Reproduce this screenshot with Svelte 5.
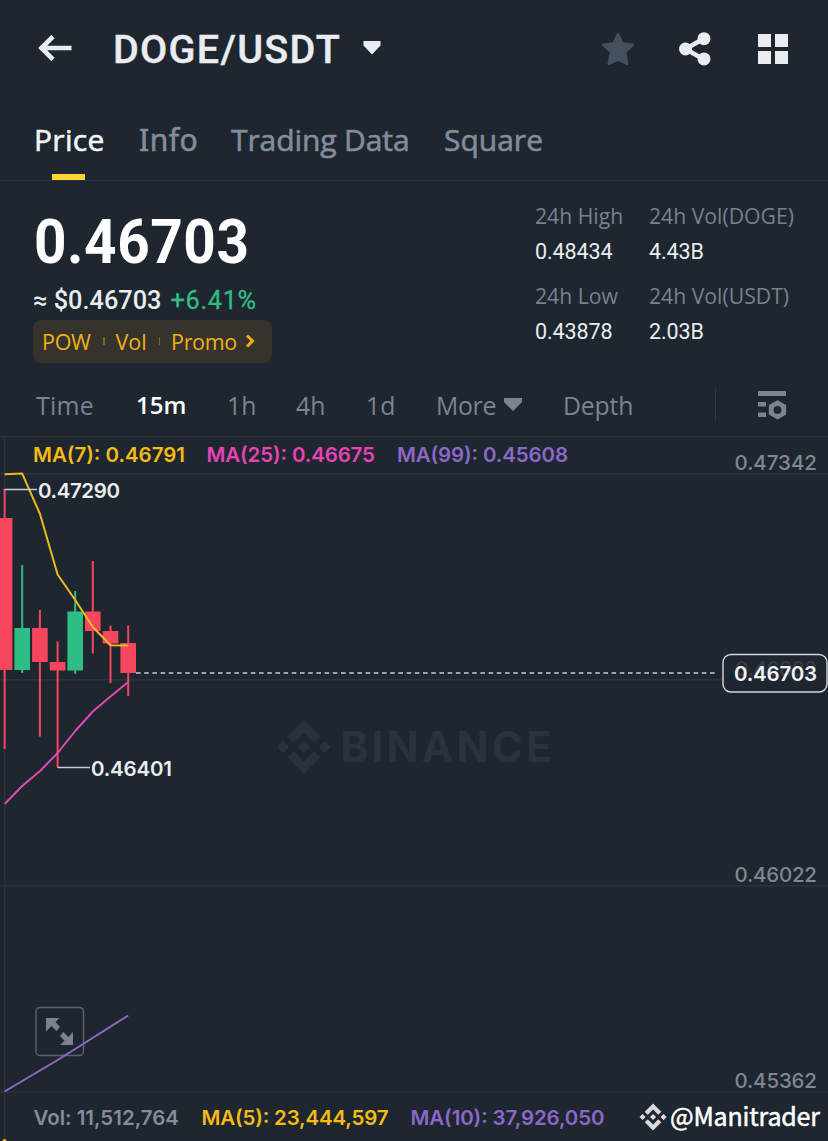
<script>
  const tabs = [
    { label: 'Price', cls: 'price', active: true },
    { label: 'Info', cls: 'info' },
    { label: 'Trading Data', cls: 'trading' },
    { label: 'Square', cls: 'square' }
  ];

  const stats = [
    { label: '24h High', value: '0.48434' },
    { label: '24h Vol(DOGE)', value: '4.43B' },
    { label: '24h Low', value: '0.43878' },
    { label: '24h Vol(USDT)', value: '2.03B' }
  ];

  const gridLines = [436.5, 473.7, 679.7, 885.7, 1092];
  const axis = [
    { y: 470, label: '0.47342' },
    { y: 882, label: '0.46022' },
    { y: 1088, label: '0.45362' }
  ];

  const candles = [
    { x: 4.6, high: 489, low: 749, top: 518, bottom: 670 },
    { x: 22.2, high: 565, low: 673, top: 628, bottom: 670, up: true },
    { x: 39.9, high: 610, low: 736.5, top: 628, bottom: 662 },
    { x: 57.6, high: 641.5, low: 767.5, top: 662, bottom: 670.5 },
    { x: 75.2, high: 591, low: 674, top: 611.5, bottom: 670.5, up: true },
    { x: 92.8, high: 561, low: 653.5, top: 611.5, bottom: 631 },
    { x: 110.5, high: 625.5, low: 683, top: 631, bottom: 643.5 },
    { x: 128.2, high: 625.5, low: 696, top: 643, bottom: 673 }
  ];

  const legend = [
    { x: 33, y: 462, w: 152, label: 'MA(7): 0.46791', color: '#f5ba14' },
    { x: 206.5, y: 462, w: 168.5, label: 'MA(25): 0.46675', color: '#e843b4' },
    { x: 397, y: 462, w: 171, label: 'MA(99): 0.45608', color: '#8c67c8' },
    { x: 33.5, y: 1124.5, w: 145.5, label: 'Vol: 11,512,764', color: '#848c9b' },
    { x: 201.5, y: 1124.5, w: 187, label: 'MA(5): 23,444,597', color: '#f5ba14' },
    { x: 410.5, y: 1124.5, w: 194, label: 'MA(10): 37,926,050', color: '#8c67c8' }
  ];

  const logo =
    'M16.624 13.9202l2.7175 2.7154-7.353 7.353-7.353-7.352 2.7175-2.7164 4.6355 4.6595 4.6356-4.6595zm4.6366-4.6366L24 12l-2.7154 2.7164L18.5682 12l2.6924-2.7164zm-9.272.001l2.7163 2.6914-2.7164 2.7174v-.001L9.2721 12l2.7164-2.7154zm-9.2722-.001L5.4088 12l-2.6914 2.6924L0 12l2.7164-2.7164zM11.9885.0115l7.353 7.329-2.7174 2.7154-4.6356-4.6356-4.6355 4.6595-2.7174-2.7154 7.353-7.353z';
</script>

<main>
  <header>
    <svg class="back" width="34" height="28" viewBox="0 0 34 28">
      <path d="M15 2.5 3.5 14 15 25.5M4 14h29.500" fill="none" stroke="currentColor" stroke-width="4.600" />
    </svg>
    <h1>DOGE/USDT</h1>
    <svg class="caret" width="18" height="14" viewBox="0 0 18 14"><path d="M.5 0h17v4.500L9 13.500.5 4.500z" fill="currentColor" /></svg>
    <div class="actions">
      <svg width="34" height="34" viewBox="0 0 34 34">
        <path d="M17 2l4.400 9.400 10.600 1.200-7.900 7.400 2.200 12-9.300-4.400L7.700 32l2.200-12L2 12.600l10.600-1.200z" fill="#454f5e" stroke="#454f5e" stroke-width="2.400" stroke-linejoin="round" />
      </svg>
      <svg width="32" height="34" viewBox="0 0 32 34">
        <path d="M25 6.500 6.500 17 25 27.500" fill="none" stroke="currentColor" stroke-width="4.500" />
        <circle cx="6.500" cy="17" r="6.500" fill="currentColor" />
        <circle cx="25" cy="6.700" r="6.500" fill="currentColor" />
        <circle cx="25" cy="26.900" r="6.500" fill="currentColor" />
      </svg>
      <svg width="30" height="30" viewBox="0 0 30 30">
        <path d="M0 0h13v13H0zM17 0h13v13H17zM0 17h13v13H0zM17 17h13v13H17z" fill="currentColor" />
      </svg>
    </div>
  </header>

  <nav>
    {#each tabs as tab}
      <span class="tab {tab.cls}" class:active={tab.active}>{tab.label}</span>
    {/each}
  </nav>

  <section class="summary">
    <div class="quote">
      <div class="last">0.46703</div>
      <div class="fiat"><span>≈ $0.46703</span><span class="change">+6.41%</span></div>
      <div class="tags">
        <span class="pow">POW</span><i></i><span class="vol">Vol</span><i></i><span class="promo">Promo</span>
        <svg width="10" height="14" viewBox="0 0 10 14"><path d="M2 1.500 7.500 7 2 12.500" fill="none" stroke="currentColor" stroke-width="3" /></svg>
      </div>
    </div>
    <dl>
      {#each stats as s}
        <div><dt>{s.label}</dt><dd>{s.value}</dd></div>
      {/each}
    </dl>
  </section>

  <div class="intervals">
    <span class="time">Time</span>
    <span class="m15 active">15m</span>
    <span class="h1">1h</span>
    <span class="h4">4h</span>
    <span class="d1">1d</span>
    <span class="more">More<svg width="20" height="14" viewBox="0 0 20 14"><path d="M1 0h18v4L10 13 1 4z" fill="currentColor" /></svg></span>
    <span class="depth">Depth</span>
    <b></b>
    <svg class="settings" width="30" height="30" viewBox="0 0 30 30">
      <path d="M1 1h28v5H1zM1 12h8v4.500H1zM1 22.500h8V27H1z" fill="currentColor" />
      <path fill-rule="evenodd" d="M20.500 10.200l8.700 4.800v9.400l-8.700 5.100-8.700-5.100V15zM20.500 16a3.900 3.900 0 1 0 0 7.800a3.900 3.900 0 1 0 0-7.800z" fill="currentColor" />
    </svg>
  </div>

  <svg class="chart" width="828" height="705" viewBox="0 436 828 705">
    <g stroke="#2a323b" stroke-width="1.600">
      {#each gridLines as y}<path d="M0 {y}H828" />{/each}
      <path d="M4.600 436.500V1141" />
    </g>

    <g fill="#2b323c">
      <path d={logo} transform="translate(277 720) scale(2.240)" />
      <text class="brand" x="340.500" y="761.500" textLength="211">BINANCE</text>
    </g>

    <g class="scale">
      {#each axis as a}<text x="734.500" y={a.y} textLength="82.500">{a.label}</text>{/each}
    </g>
    {#each legend as l}
      <text x={l.x} y={l.y} textLength={l.w} fill={l.color}>{l.label}</text>
    {/each}

    <g class="expand">
      <rect x="36" y="1007.500" width="47.500" height="48" rx="4" fill="none" stroke="#5c6471" stroke-width="1.400" />
      <path d="M46 1018H59.500L55.500 1022 60 1027 56.500 1031 51.500 1026 46 1031.500zM73 1045H60L64.500 1040.800 60 1036 63.500 1032 68.500 1037 73 1031.800z" fill="#7a8290" />
    </g>

    {#each candles as c}
      <g fill={c.up ? '#2ebd85' : '#f6465d'}>
        <rect x={c.x - 1} y={c.high} width="2" height={c.low - c.high} />
        <rect x={c.x - 7.8} y={c.top} width="15.600" height={c.bottom - c.top} />
      </g>
    {/each}

    <g fill="none" stroke-width="2" stroke-linejoin="round">
      <path stroke="#f0b91c" d="M4.600 474.200 22.200 473.600 40 514 57.600 574.500 75.200 600 92.800 627 110.500 645.200 128.200 645.500" />
      <path stroke="#e04bb0" d="M4.600 804 22.200 786 40 771 57.600 753 75.200 731 92.800 711.500 110.500 696.500 128.200 682" />
      <path stroke="#8f68c9" d="M4.600 1091.500 57.600 1060 75.200 1049 128.200 1015.500" />
    </g>

    <g stroke="#c9cdd3" stroke-width="1.400" fill="none">
      <path d="M4.600 489.500H37" />
      <path d="M57.600 767.500H90" />
      <path d="M136 673H716" stroke-dasharray="4.600 3.600" />
    </g>
    <g fill="#eaecef">
      <text x="38" y="498" textLength="82">0.47290</text>
      <text x="91" y="775.500" textLength="81">0.46401</text>
    </g>

    <rect x="723" y="654.500" width="104" height="37.500" rx="8" fill="#1e262f" stroke="#d5d9de" stroke-width="1.400" />
    <text x="735" y="676" textLength="82" fill="#343b46">0.46682</text>
    <text x="734" y="681" textLength="83" fill="#f3f4f6">0.46703</text>

    <path d="M2.500 1141a2 2 0 0 1 4 0z" fill="#f0b91c" />
    <path d={logo} transform="translate(639.500 1103.500) scale(1.130)" fill="#d8d9dc" />
    <text class="author" x="670" y="1126" textLength="150">@Manitrader</text>
  </svg>
</main>

<style>
  :global(body) { background: #1e262f; }
  main {
    width: 828px; height: 1141px; overflow: hidden;
    display: flex; flex-direction: column;
    background: #1e262f; color: #eaecef;
    font-family: 'Open Sans', 'Noto Sans', sans-serif;
  }
  svg { display: block; flex: none; }

  header { height: 98px; display: flex; align-items: center; padding: 0 40px 0 38px; box-sizing: border-box; flex: none; }
  .back { margin-right: 41px; margin-bottom: 2px; }
  h1 { margin: 1px 0 0; width: 250px; font: 500 39.500px Roboto, sans-serif; letter-spacing: 1.300px; -webkit-text-stroke: .4px currentColor; }
  .caret { margin-bottom: 3px; }
  .actions { margin-left: auto; display: flex; align-items: center; }
  .actions svg:nth-child(1) { margin-right: 44px; }
  .actions svg:nth-child(2) { margin-right: 47px; }

  nav { height: 83px; box-sizing: border-box; border-bottom: 1.500px solid #2b323c; display: flex; padding-left: 34px; flex: none; }
  .tab { position: relative; box-sizing: border-box; height: 82px; padding-top: 21px; font-size: 30px; line-height: 42px; font-weight: 400; color: #848c9b; -webkit-text-stroke: .6px currentColor; white-space: nowrap; }
  .tab.price { width: 105px; letter-spacing: .3px; }
  .tab.info { width: 92px; font-family: 'Noto Sans', sans-serif; letter-spacing: .5px; }
  .tab.trading { width: 213px; letter-spacing: -.1px; }
  .tab.active { color: #f3f4f6; }
  .tab.active::after { content: ''; position: absolute; left: 18px; bottom: 0; width: 33px; height: 6px; background: #fcd535; }

  .summary { height: 194px; flex: none; display: flex; justify-content: space-between; padding: 0 0 0 33px; }
  .last { margin-top: 26px; padding-left: 1px; height: 76px; font: 700 61px/70px Roboto, sans-serif; letter-spacing: .6px; color: #fff; transform: scaleX(.93); transform-origin: 0 0; }
  .fiat { display: flex; gap: 9px; height: 37px; font: 500 25.300px/36px Roboto, sans-serif; white-space: nowrap; }
  .change { color: #2ebd85; font-weight: 400; letter-spacing: .7px; -webkit-text-stroke: .3px currentColor; }
  .tags { width: 239px; height: 43px; border-radius: 8px; box-sizing: border-box; padding: 0 0 1px 9px; display: flex; align-items: center; background: #35332c; color: #f0b014; font-size: 21.500px; }
  .tags i { width: 1.500px; height: 8px; background: #78602a; margin-right: 11px; }
  .pow { width: 61px; letter-spacing: -.3px; }
  .vol { width: 43px; }
  .promo { width: 74px; letter-spacing: -.3px; }
  dl { margin: 19px 0 0; width: 293px; display: grid; grid-template-columns: 114px 1fr; grid-template-rows: 79.500px 79.500px; }
  dt { font-size: 21.200px; line-height: 32px; color: #79808f; white-space: nowrap; }
  dd { margin: 1px 0 0; font: 400 21.500px/38px Roboto, sans-serif; letter-spacing: -.1px; color: #eaecef; }

  .intervals { height: 61px; flex: none; box-sizing: border-box; padding: 0 0 2px 36px; display: flex; align-items: center; font-size: 24.800px; color: #7c8492; }
  .intervals span { white-space: nowrap; }
  .intervals .active { color: #fff; font-weight: 600; font-size: 24px; }
  .time { width: 100px; letter-spacing: .3px; }
  .m15 { width: 91px; }
  .h1 { width: 69px; }
  .h4 { width: 70px; }
  .d1 { width: 70px; }
  .more { width: 127px; display: flex; align-items: center; gap: 7px; letter-spacing: -.3px; }
  .depth { width: 152px; letter-spacing: -.2px; }
  .intervals b { width: 1px; height: 35px; background: #2f3641; margin-right: 41px; }

  .chart text { font: 600 20.500px Inter, sans-serif; }
  .chart .scale text { fill: #7f8795; font-weight: 500; }
  .chart text.brand { font: 700 42px Inter, sans-serif; }
  .chart text.author { font: 400 25px 'Noto Sans CJK SC', sans-serif; fill: #fff; stroke: #fff; stroke-width: .5px; }
</style>
